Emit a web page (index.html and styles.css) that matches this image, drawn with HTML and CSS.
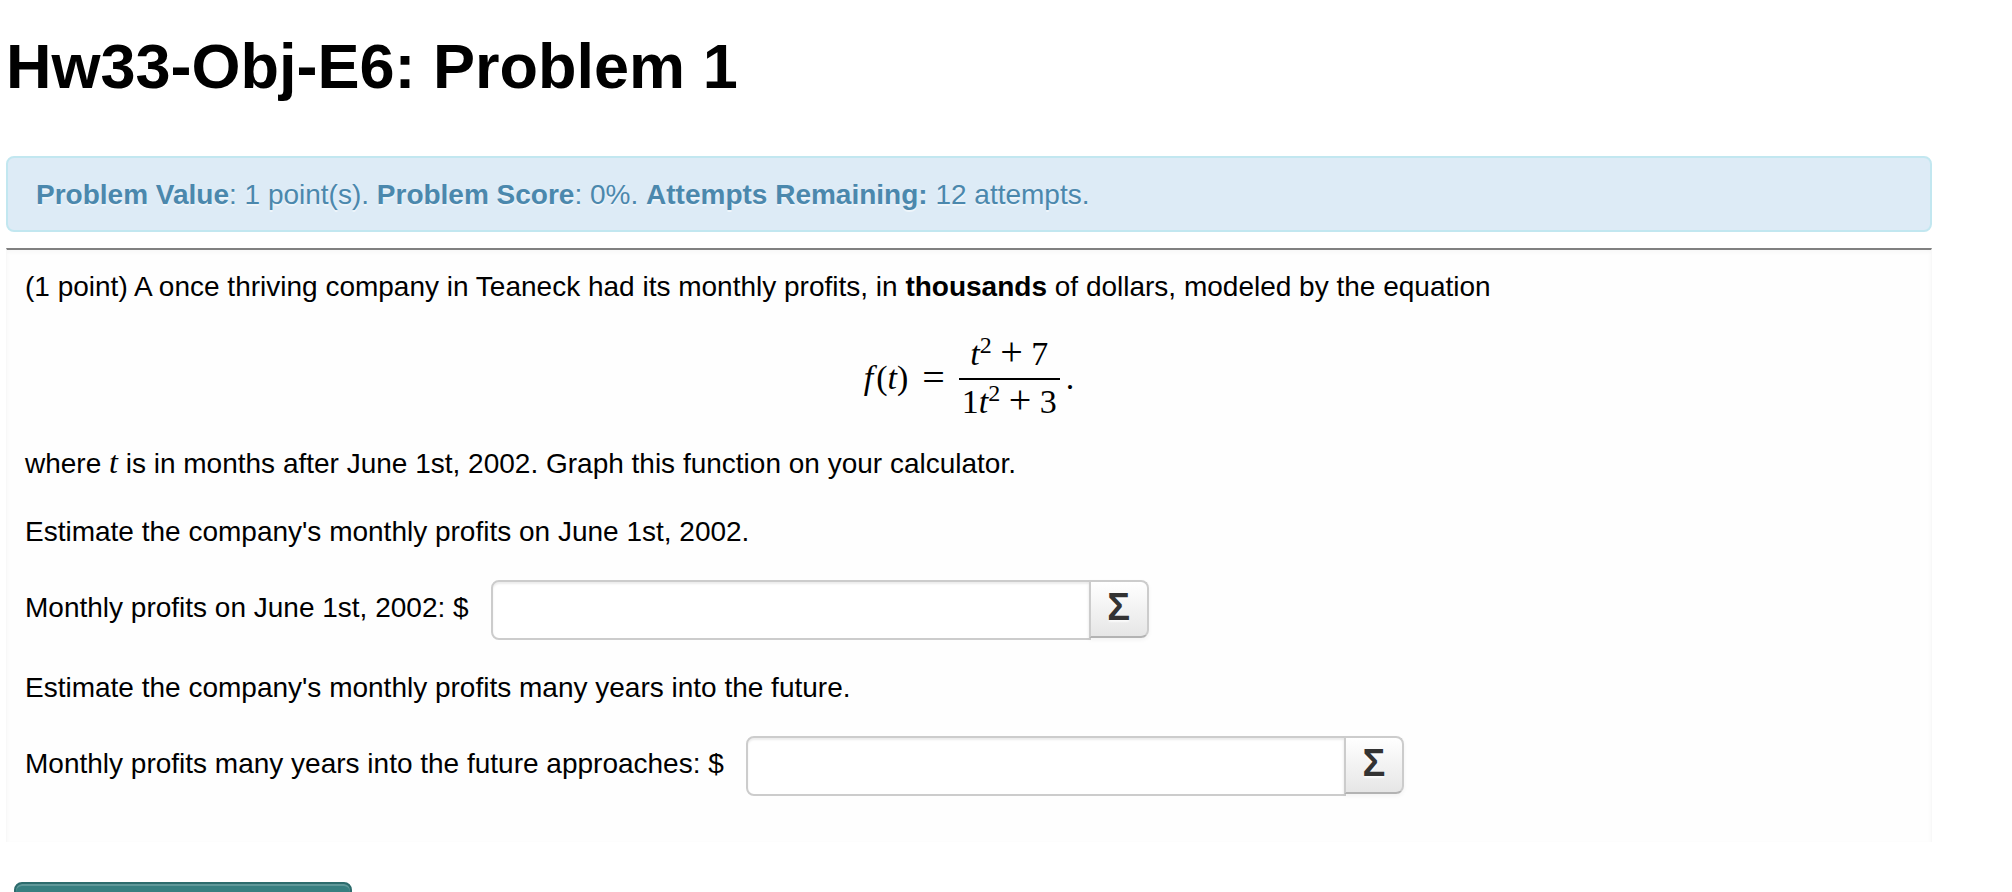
FILE: index.html
```
<!doctype html>
<html lang="en">
<head>
	<meta charset="utf-8">
	<title>Hw33-Obj-E6: Problem 1</title>
	<link rel="stylesheet" href="styles.css">
</head>
<body>
	<h1 class="page-title">Hw33-Obj-E6: Problem 1</h1>

	<div class="alert">
		<b>Problem Value</b>: 1 point(s). <b>Problem Score</b>: 0%. <b>Attempts Remaining:</b> 12 attempts.
	</div>

	<form>
		<div class="problem">
			<p>(1 point) A once thriving company in Teaneck had its monthly profits, in <b>thousands</b> of dollars, modeled by the equation</p>

			<div class="equation">
				<span><i class="fn">f</i>(<i>t</i>)</span>
				<span class="equals">=</span>
				<span class="fraction">
					<span class="numerator"><i>t</i><sup>2</sup> <span class="op">+</span> 7</span>
					<span class="denominator">1<i>t</i><sup>2</sup> <span class="op">+</span> 3</span>
				</span>
				<span>.</span>
			</div>

			<p>where <i class="var">t</i> is in months after June 1st, 2002. Graph this function on your calculator.</p>
			<p>Estimate the company's monthly profits on June 1st, 2002.</p>
			<div class="answer">
				<label for="ans1">Monthly profits on June 1st, 2002: $</label>
				<input id="ans1" type="text">
				<button type="button" class="sigma">Σ</button>
			</div>
			<p>Estimate the company's monthly profits many years into the future.</p>
			<div class="answer">
				<label for="ans2">Monthly profits many years into the future approaches: $</label>
				<input id="ans2" type="text">
				<button type="button" class="sigma">Σ</button>
			</div>
		</div>
		<button type="submit" class="submit" aria-label="Submit"></button>
	</form>
</body>
</html>
```

FILE: styles.css
```
* { box-sizing: border-box; }
html { height: 100vh; overflow: hidden; }
body { height: 100vh; margin: 0; padding: 26px 80px 0 6px; overflow: hidden; background: #fff; color: #000; font: 28px/40px "Helvetica Neue", Helvetica, "Liberation Sans", Arial, sans-serif; }

.page-title { margin: 0 0 50px; font-size: 63px; line-height: 80px; }

.alert { margin-bottom: 16px; padding: 17px 28px 15px; border: 2px solid #c2e7f0; border-radius: 8px; background: #ddebf6; color: #4b88ad; text-shadow: 0 2px 0 rgba(255,255,255,0.5); }

/* problem text */
.problem { padding: 17px 18px 46px; border: 1px solid #f8f8f8; border-top: 2px solid #808080; border-bottom: 0; background: #fefefe; box-shadow: inset 0 2px 4px rgba(0,0,0,0.03); }
.problem p { margin: 0 0 28px; }
.var { font-family: "Liberation Serif", "Times New Roman", serif; font-size: 32px; line-height: 1; }

.equation { display: flex; align-items: center; justify-content: center; margin: 29px 0 24px; font-family: "Liberation Serif", "Times New Roman", serif; font-size: 34px; line-height: 36px; }
.problem p:first-child { margin: 0; }
.fn { margin-right: 3px; }
.equals { margin: 0 14px; font-size: 40px; }
.fraction { display: flex; flex-direction: column; margin-right: 6px; text-align: center; }
.numerator { padding: 0 3px 6px; border-bottom: 2px solid #000; }
.denominator { padding: 4px 3px 0; }
.op { font-size: 40px; line-height: 0; }
.equation sup { font-size: 24px; line-height: 0; vertical-align: 12px; }

/* answer boxes */
.answer { display: flex; align-items: flex-start; margin-bottom: 28px; }
.answer:last-child { margin-bottom: 0; }
.answer label { margin-right: 22px; line-height: 56px; }
.answer input { width: 600px; height: 60px; padding: 8px 12px; border: 2px solid #ccc; border-radius: 8px 0 0 8px; background: #fff; font: inherit; box-shadow: inset 0 2px 2px rgba(0,0,0,0.075); }
.sigma { width: 60px; height: 58px; margin-left: -2px; padding: 0 0 4px; border: 2px solid #ccc; border-bottom-color: #b3b3b3; border-radius: 0 8px 8px 0; background: linear-gradient(#fff, #e6e6e6); color: #333; font: bold 38px/50px "Liberation Sans", Arial, sans-serif; text-shadow: 0 2px 2px rgba(255,255,255,0.75); box-shadow: 0 2px 4px rgba(0,0,0,0.05); }

.submit { display: block; width: 338px; height: 60px; margin: 40px 0 0 8px; border: 2px solid #2d6c6d; border-radius: 8px; background: #377f80; box-shadow: inset 0 2px 0 rgba(255,255,255,0.2); }
```
